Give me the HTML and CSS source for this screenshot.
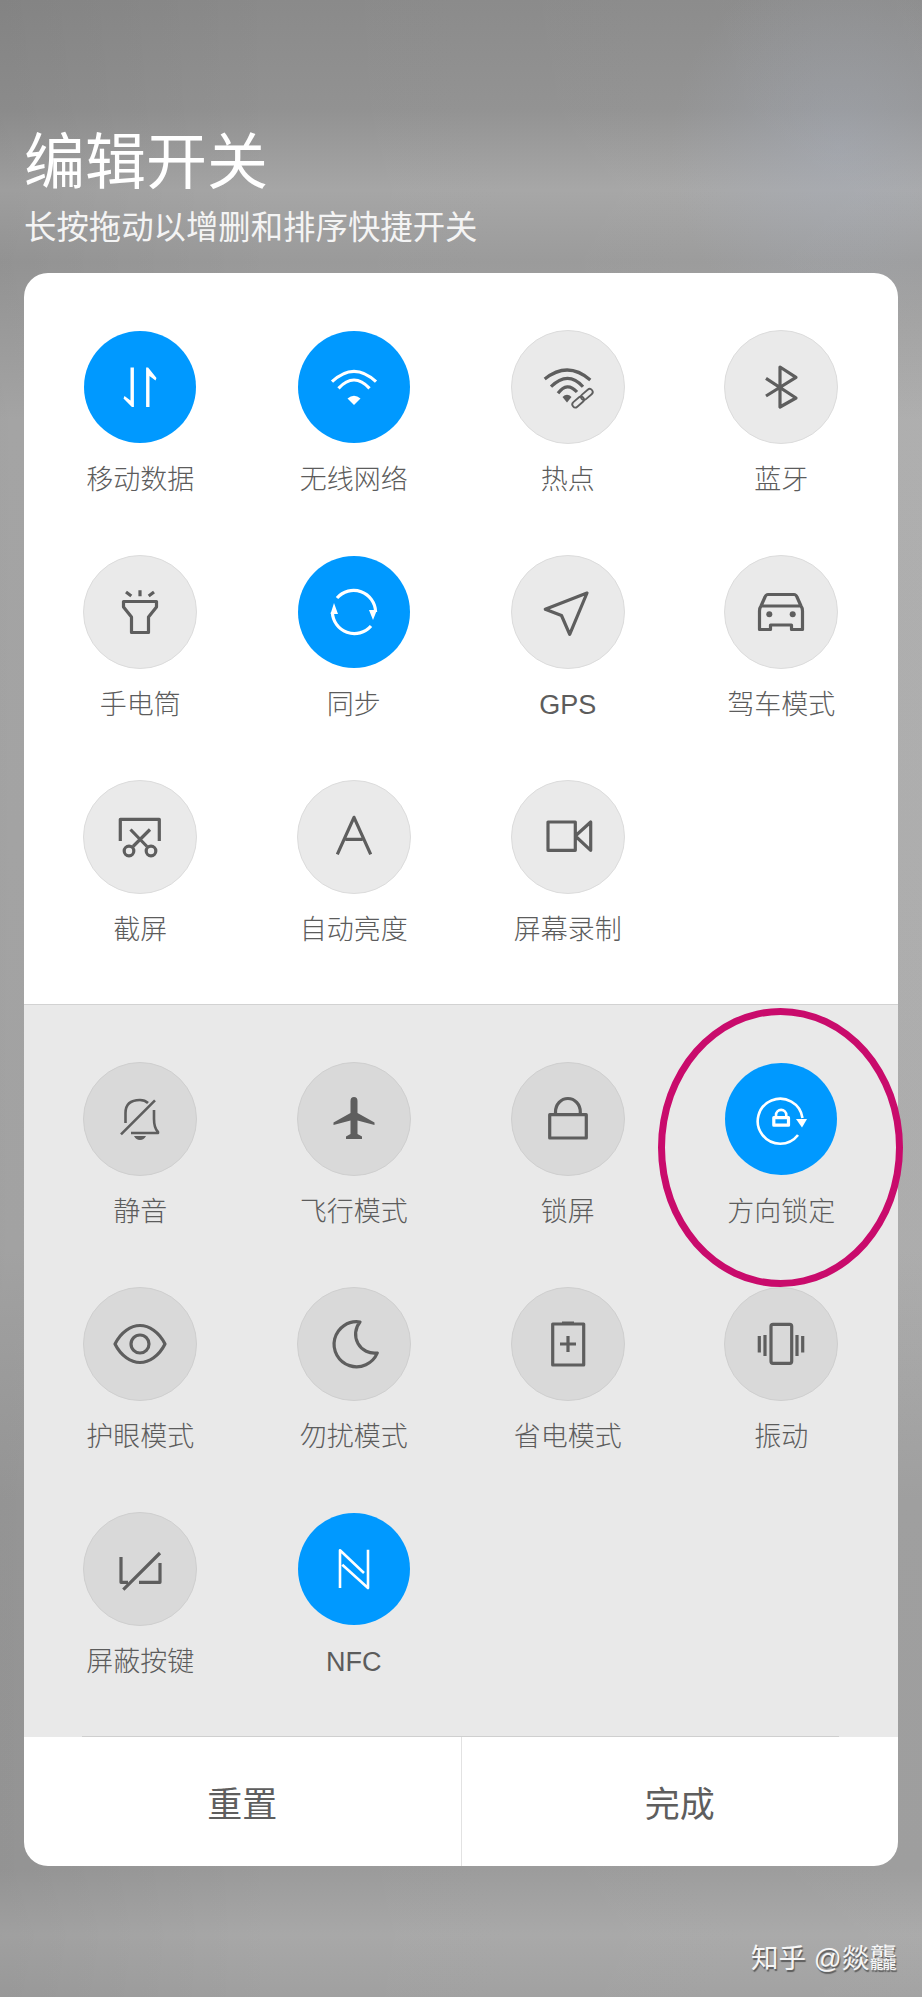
FILE: index.html
```html
<!DOCTYPE html>
<html lang="zh-CN">
<head>
    <meta charset="UTF-8">
    <meta name="viewport" content="width=device-width, initial-scale=1.0">
    <title>编辑开关</title>
    <link rel="stylesheet" href="styles.css">
</head>
<body>
    <header class="head">
        <h1>编辑开关</h1>
        <p>长按拖动以增删和排序快捷开关</p>
    </header>

    <main class="panel">
        <!-- active tiles -->
        <section class="tiles">
            <div class="tile">
                <span class="dial on">
                    <svg class="ico" viewBox="-30 -30 60 60"><path class="solid" d="M-9.5-19.5h3.4V20h-2L-16.5 11.5-15.5 9-9.5 13.5zM9.5 20H6.1v-39.5h2L16.5-9 15.5-6.5 9.5-11z"/></svg>
                </span>
                <span class="name">移动数据</span>
            </div>
            <div class="tile">
                <span class="dial on">
                    <svg class="ico" viewBox="-30 -30 60 60"><path d="M-22-5.3Q0-26 22-5.3M-15.5 1.3Q0-15.3 15.5 1.3"/><path class="solid" d="M0 18-6.5 11.5Q0 6 6.5 11.5Z"/></svg>
                </span>
                <span class="name">无线网络</span>
            </div>
            <div class="tile">
                <span class="dial">
                    <svg class="ico" viewBox="-30 -30 60 60"><path d="M-23.3-8Q0-26.5 22.3-7M-17-.3Q0-17 15-.3M-10 6.3Q-1-6 9 5"/><path class="solid" d="M-1 15.5-5.5 10Q-1 5.5 3.5 10Z"/><g class="thin" transform="translate(14.5 11.2) rotate(-41)"><rect x="-12.5" y="-3" width="13.5" height="6" rx="3"/><rect x="-1" y="-3" width="13.5" height="6" rx="3"/></g></svg>
                </span>
                <span class="name">热点</span>
            </div>
            <div class="tile">
                <span class="dial">
                    <svg class="ico" viewBox="-30 -30 60 60"><path d="M-15-8.7 15 11-1 20V-20L15-9.7-15 9"/></svg>
                </span>
                <span class="name">蓝牙</span>
            </div>
            <div class="tile">
                <span class="dial">
                    <svg class="ico" viewBox="-30 -30 60 60"><path d="M0-21.7V-15.7M-14-20-8.7-16M14-20 8.7-16M-16.5-10.5H16.5V-5L8.5 5V20.5H-8.5V5L-16.5-5Z"/></svg>
                </span>
                <span class="name">手电筒</span>
            </div>
            <div class="tile">
                <span class="dial on">
                    <svg class="ico" viewBox="-30 -30 60 60"><path d="M-17-14A22 22 0 0 1 21.6 0M17 14A22 22 0 0 1-21.6 0"/><path class="solid" d="M-20-9-23.5 2H-16ZM19 8 15-2H23Z"/></svg>
                </span>
                <span class="name">同步</span>
            </div>
            <div class="tile">
                <span class="dial">
                    <svg class="ico" viewBox="-30 -30 60 60"><path d="M19-19-22.7-2.7-6.5 3.5 1.7 22.3Z"/></svg>
                </span>
                <span class="name">GPS</span>
            </div>
            <div class="tile">
                <span class="dial">
                    <svg class="ico" viewBox="-30 -30 60 60"><path d="M-13-17.5H13Q15-17.5 16-15L20-6Q21.5-4 21.5-1V17.5H10.5V13H-10.5V17.5H-21.5V-1Q-21.5-4-20-6L-16-15Q-15-17.5-13-17.5ZM-20-6H20"/><circle class="solid" cx="-11.7" cy="2.3" r="3"/><circle class="solid" cx="11.7" cy="2.3" r="3"/></svg>
                </span>
                <span class="name">驾车模式</span>
            </div>
            <div class="tile">
                <span class="dial">
                    <svg class="ico" viewBox="-30 -30 60 60"><path d="M-19.7 4V-17.7H19.3V4M-7 9.5 10-7.5M7 9.5-9.5-7.5"/><circle cx="-11" cy="14" r="4.8"/><circle cx="11" cy="14" r="4.8"/></svg>
                </span>
                <span class="name">截屏</span>
            </div>
            <div class="tile">
                <span class="dial">
                    <svg class="ico" viewBox="-30 -30 60 60"><path d="M-16.7 17.3 0-19.7 16.7 17.3M-8.5 2.3H8.5"/></svg>
                </span>
                <span class="name">自动亮度</span>
            </div>
            <div class="tile">
                <span class="dial">
                    <svg class="ico" viewBox="-30 -30 60 60"><path d="M-20-15H7.3V13.3H-20ZM7.3-1 22.7-15V13.3Z"/></svg>
                </span>
                <span class="name">屏幕录制</span>
            </div>
        </section>

        <!-- spare tiles -->
        <section class="tiles spare">
            <div class="tile">
                <span class="dial">
                    <svg class="ico" viewBox="-30 -30 60 60"><path class="fine" d="M-14.5 4V-6Q-14.5-19 0-19 5-19 8-16M14-9V0Q14 9 18 13V14H-9M15-18.7-19 15.3"/><path class="solid" d="M-6 17H6Q4 21 0 21T-6 17Z"/></svg>
                </span>
                <span class="name">静音</span>
            </div>
            <div class="tile">
                <span class="dial">
                    <svg class="ico" viewBox="-30 -30 60 60"><path class="solid" d="M0-22Q3.5-22 3.5-18V-6L20.5 3.5V6L3.5 1.5V15L8 17.5V20H-8V17.5L-3.5 15V1.5L-20.5 6V3.5L-3.5-6V-18Q-3.5-22 0-22Z"/></svg>
                </span>
                <span class="name">飞行模式</span>
            </div>
            <div class="tile">
                <span class="dial">
                    <svg class="ico" viewBox="-30 -30 60 60"><path d="M-18.3-4.3H18.3V19H-18.3ZM-12.5-4.3V-7A12.4 13.5 0 0 1 12.3-7V-4.3"/></svg>
                </span>
                <span class="name">锁屏</span>
            </div>
            <div class="tile">
                <span class="dial on">
                    <svg class="ico" viewBox="-30 -30 60 60"><path class="fine" d="M21.5-1A22.5 22.5 0 1 0 17 16"/><path class="solid" d="M15 0H26L21 8.5Z"/><path d="M-7.2 6.2H7.5V-1.3H-7.2Z"/><path class="fine" d="M-5-2V-4A5 5 0 0 1 5.3-4V-2"/></svg>
                </span>
                <span class="name">方向锁定</span>
            </div>
            <div class="tile">
                <span class="dial">
                    <svg class="ico" viewBox="-30 -30 60 60"><path d="M-25 0C-19-12-9-18.5 0-18.5S19-12 25 0C19 12 9 18.5 0 18.5S-19 12-25 0Z"/><circle cx="0" cy="0" r="9"/></svg>
                </span>
                <span class="name">护眼模式</span>
            </div>
            <div class="tile">
                <span class="dial">
                    <svg class="ico" viewBox="-30 -30 60 60"><path d="M6-22A22.5 22.5 0 1 0 23.3 9 19 19 0 0 1 6-22Z"/></svg>
                </span>
                <span class="name">勿扰模式</span>
            </div>
            <div class="tile">
                <span class="dial">
                    <svg class="ico" viewBox="-30 -30 60 60"><path d="M-15.3-20H15.7V21H-15.3ZM-8 0H8M0-8V8"/><path class="solid" d="M-6-20V-22.5H6V-20Z"/></svg>
                </span>
                <span class="name">省电模式</span>
            </div>
            <div class="tile">
                <span class="dial">
                    <svg class="ico" viewBox="-30 -30 60 60"><rect x="-10" y="-19.7" width="20.7" height="39" rx="2"/><path d="M-16-9V12M-21.7-8V8.5M16-9V12M21.7-8V8.5"/></svg>
                </span>
                <span class="name">振动</span>
            </div>
            <div class="tile">
                <span class="dial">
                    <svg class="ico" viewBox="-30 -30 60 60"><path d="M-19-12V13.3H-12M-1 13.3H20V-6M20-16-16.7 20.7"/></svg>
                </span>
                <span class="name">屏蔽按键</span>
            </div>
            <div class="tile">
                <span class="dial on">
                    <svg class="ico" viewBox="-30 -30 60 60"><path class="fine" d="M-14 19V-18.7L10 4M-11.7-4.3 14 19V-19.3"/></svg>
                </span>
                <span class="name">NFC</span>
            </div>
            <div class="rule"></div>
        </section>

        <footer class="actions">
            <button class="action">重置</button>
            <button class="action">完成</button>
        </footer>

        <!-- hand drawn ring over the screenshot -->
        <div class="ring"></div>
    </main>

    <div class="credit">知乎 @燚龘</div>
</body>
</html>
```

FILE: styles.css
```css
html, body {
    margin: 0;
    padding: 0;
}
body {
    width: 922px;
    height: 1997px;
    overflow: hidden;
    font-family: 'Liberation Sans', 'Noto Sans CJK SC', sans-serif;
    background:
        radial-gradient(ellipse 170px 190px at 840px 150px, rgba(168,176,192,0.38), rgba(168,176,192,0)),
        linear-gradient(90deg, rgba(0,0,0,0.05), rgba(0,0,0,0) 30%, rgba(255,255,255,0.03)),
        linear-gradient(#8a8a8a 0, #929292 110px, #a6a6a6 190px, #9a9a9a 262px, #acacac 420px, #aaaaaa 1250px, #9c9c9c 1500px, #9b9b9b 1870px, #a8a8a8 1935px, #a0a0a0 100%);
}
.head {
    height: 273px;
    box-sizing: border-box;
    padding: 125px 0 0 24px;
    color: #fff;
}
.head h1 {
    margin: 0;
    font-size: 61px;
    line-height: 76px;
    font-weight: 400;
}
.head p {
    margin: 5px 0 0;
    font-size: 32.4px;
    line-height: 44px;
    font-weight: 400;
    color: #f4f4f4;
}
.panel {
    position: relative;
    width: 874px;
    margin-left: 24px;
}
.tiles {
    display: grid;
    grid-template-columns: 213.5px 213.5px 214.5px 212.5px;
    grid-template-rows: 225px 225px 224px;
    padding: 57px 0 0 9.5px;
    background-color: #fff;
    border-radius: 24px 24px 0 0;
}
.tiles.spare {
    grid-template-rows: 225px 225px 224px 1px;
    background-color: #e9e9e9;
    border-top: 1px solid #d2d2d2;
    border-radius: 0;
}
.tile {
    display: flex;
    flex-direction: column;
    align-items: center;
    gap: 17.5px;
}
.dial {
    display: flex;
    align-items: center;
    justify-content: center;
    width: 114px;
    height: 114px;
    box-sizing: border-box;
    border: 1.5px solid #dcdcdc;
    border-radius: 50%;
    background-color: #eaeaea;
    color: #5e5e5e;
}
.spare .dial {
    background-color: #d9d9d9;
    border-color: #cfcfcf;
}
.dial.on, .spare .dial.on {
    background-color: #0099ff;
    background-clip: padding-box;
    border-color: transparent;
    color: #fff;
}
.ico {
    width: 60px;
    height: 60px;
    fill: none;
    stroke: currentColor;
    stroke-width: 3.2;
    stroke-linejoin: round;
}
.ico .solid {
    fill: currentColor;
    stroke: none;
}
.ico .fine {
    stroke-width: 2.6;
}
.ico .thin {
    stroke-width: 1.8;
}
.name {
    font-size: 27px;
    line-height: 36px;
    font-weight: 300;
    color: #5c5c5c;
}
.rule {
    grid-column: 1 / -1;
    height: 1px;
    margin: 0 48.5px;
    background-color: #cfcfcf;
}
.actions {
    display: flex;
    height: 129px;
    background-color: #fff;
    border-radius: 0 0 24px 24px;
    overflow: hidden;
}
.action {
    flex: 1;
    padding: 0;
    border: 0;
    background: none;
    font-family: inherit;
    font-size: 35px;
    color: #5e5e5e;
}
.action:first-child {
    border-right: 1px solid #e2e2e2;
}
.ring {
    position: absolute;
    left: 634px;
    top: 735px;
    width: 245px;
    height: 279px;
    box-sizing: border-box;
    border: 7px solid #c90b6c;
    border-radius: 50%;
}
.credit {
    margin-top: 73px;
    padding-right: 25px;
    text-align: right;
    font-size: 27.6px;
    line-height: 40px;
    color: #f6f6f6;
    text-shadow: 1px 2px 1px rgba(0,0,0,0.45);
}
```
